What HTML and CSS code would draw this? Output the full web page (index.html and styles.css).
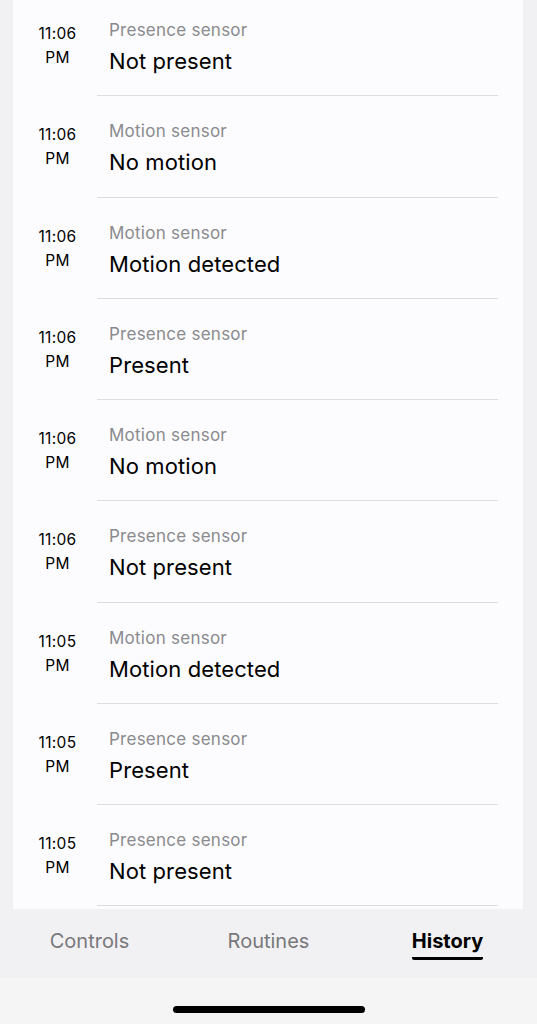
FILE: index.html
```html
<!DOCTYPE html>
<html lang="en">
  <head>
    <meta charset="UTF-8" />
    <meta name="viewport" content="width=device-width, initial-scale=1.0" />
    <title>History</title>
    <link rel="stylesheet" href="styles.css">
  </head>
  <body>
    <div class="screen">
      <div class="card">
        <ul class="history">
          <li class="entry">
            <div class="time">11:06<br />PM</div>
            <div class="info">
              <div class="device">Presence sensor</div>
              <div class="state">Not present</div>
            </div>
          </li>
          <li class="entry">
            <div class="time">11:06<br />PM</div>
            <div class="info">
              <div class="device">Motion sensor</div>
              <div class="state">No motion</div>
            </div>
          </li>
          <li class="entry">
            <div class="time">11:06<br />PM</div>
            <div class="info">
              <div class="device">Motion sensor</div>
              <div class="state">Motion detected</div>
            </div>
          </li>
          <li class="entry">
            <div class="time">11:06<br />PM</div>
            <div class="info">
              <div class="device">Presence sensor</div>
              <div class="state">Present</div>
            </div>
          </li>
          <li class="entry">
            <div class="time">11:06<br />PM</div>
            <div class="info">
              <div class="device">Motion sensor</div>
              <div class="state">No motion</div>
            </div>
          </li>
          <li class="entry">
            <div class="time">11:06<br />PM</div>
            <div class="info">
              <div class="device">Presence sensor</div>
              <div class="state">Not present</div>
            </div>
          </li>
          <li class="entry">
            <div class="time">11:05<br />PM</div>
            <div class="info">
              <div class="device">Motion sensor</div>
              <div class="state">Motion detected</div>
            </div>
          </li>
          <li class="entry">
            <div class="time">11:05<br />PM</div>
            <div class="info">
              <div class="device">Presence sensor</div>
              <div class="state">Present</div>
            </div>
          </li>
          <li class="entry">
            <div class="time">11:05<br />PM</div>
            <div class="info">
              <div class="device">Presence sensor</div>
              <div class="state">Not present</div>
            </div>
          </li>
        </ul>
      </div>

      <nav class="tabs">
        <a class="tab">Controls</a>
        <a class="tab">Routines</a>
        <a class="tab active">History</a>
      </nav>

      <div class="home-area">
        <div class="home-indicator"></div>
      </div>
    </div>
  </body>
</html>
```

FILE: styles.css
```css
body {
  margin: 0;
  padding: 0;
  font-family: Inter, "Noto Sans", sans-serif;
  background-color: #f1f1f3;
}
.screen {
  width: 537px;
  height: 1024px;
  display: flex;
  flex-direction: column;
  overflow: hidden;
}
.card {
  height: 909px;
  margin: 0 14px 0 13px;
  background-color: #fcfcfe;
  overflow: hidden;
}
.history {
  list-style: none;
  margin: -5px 0 0 0;
  padding: 0;
}
.entry {
  display: flex;
  height: 101.25px;
  margin-right: 25px;
}
.time {
  width: 79px;
  margin-left: 5px;
  padding-top: 27px;
  text-align: center;
  font-size: 15.5px;
  line-height: 24px;
  letter-spacing: 0.3px;
  color: #000;
}
.info {
  flex: 1;
  padding: 25px 0 0 12px;
  border-bottom: 1px solid #dcdcde;
}
.device {
  font-size: 17px;
  line-height: 20px;
  letter-spacing: 0.25px;
  color: #8a8a8e;
}
.state {
  margin-top: 7px;
  font-size: 22px;
  line-height: 28px;
  letter-spacing: 0.1px;
  color: #000;
}
.tabs {
  height: 69px;
  display: grid;
  grid-template-columns: 1fr 1fr 1fr;
  align-items: start;
  background-color: #f1f1f3;
}
.tab {
  justify-self: center;
  padding-top: 20px;
  font-size: 20px;
  line-height: 24px;
  color: #78787c;
}
.tab.active {
  color: #000;
  font-weight: 700;
  border-bottom: 3px solid #000;
  border-radius: 0 0 2px 2px;
  padding-bottom: 4px;
}
.home-area {
  flex: 1;
  display: flex;
  justify-content: center;
  align-items: flex-end;
  background-color: #f5f5f5;
}
.home-indicator {
  width: 192px;
  height: 7px;
  margin-bottom: 11px;
  border-radius: 4px;
  background-color: #000;
}
```
